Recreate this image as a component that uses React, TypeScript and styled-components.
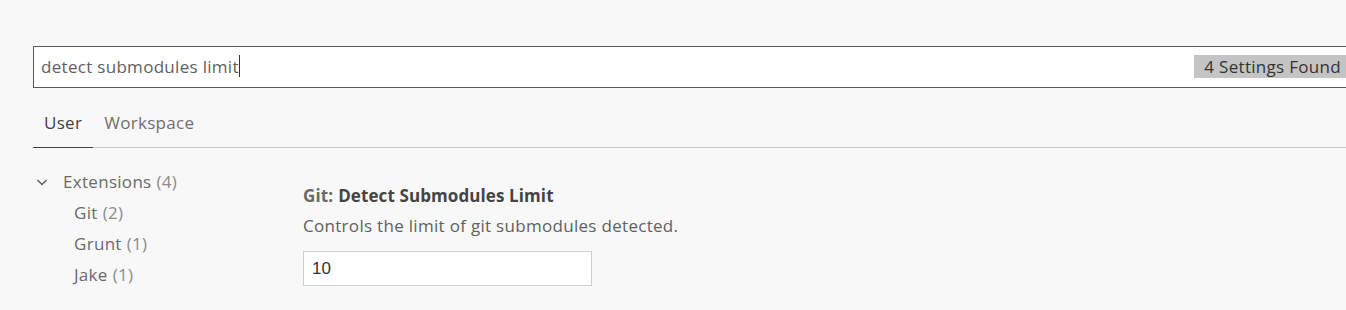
import React from "react";
import styled, { createGlobalStyle } from "styled-components";

const Global = createGlobalStyle`
  html, body { margin: 0; padding: 0; background: #f8f8f8; overflow: hidden; }
  body { font-family: "Open Sans", "Noto Sans", sans-serif; letter-spacing: 0.3px; }
`;

const Page = styled.div`
  width: 1346px;
  height: 310px;
  padding: 46px 0 0 33px;
  box-sizing: border-box;
  background: #f8f8f8;
  overflow: hidden;
`;

const SearchBox = styled.div`
  width: 1318px;
  height: 42px;
  box-sizing: border-box;
  border: 1px solid #5a5a5a;
  border-right: none;
  background: #ffffff;
  display: flex;
  align-items: center;
  padding: 0 0 2px 7px;
`;

const SearchText = styled.div`
  flex: 1;
  font-size: 17px;
  color: #5f5f5f;
  display: flex;
  align-items: center;
`;

const Caret = styled.span`
  display: inline-block;
  width: 1px;
  height: 22px;
  background: #333;
`;

const Badge = styled.div`
  height: 23px;
  background: #c4c4c4;
  color: #333333;
  font-size: 17px;
  display: flex;
  align-items: center;
  padding: 0 10px;
`;

const TabBar = styled.div`
  margin-top: 12px;
  display: flex;
  border-bottom: 1px solid #c8c8c8;
`;

const Tab = styled.div<{ $active?: boolean }>`
  height: 48px;
  padding: 0 11px 2px;
  box-sizing: border-box;
  display: flex;
  align-items: center;
  font-size: 17px;
  color: ${(p) => (p.$active ? "#424242" : "#6f6f6f")};
  margin-bottom: -1px;
  border-bottom: 1px solid ${(p) => (p.$active ? "#424242" : "transparent")};
`;

const Body = styled.div`
  display: flex;
  padding-top: 18px;
`;

const Tree = styled.div`
  width: 270px;
  display: flex;
  flex-direction: column;
`;

const TreeRow = styled.div<{ $indent: number }>`
  height: 31px;
  display: flex;
  align-items: center;
  padding-left: ${(p) => p.$indent}px;
  font-size: 17px;
  color: #6a6a6a;
`;

const Count = styled.span`
  color: #8c8c8c;
  margin-left: 5px;
`;

const Chevron = styled.svg`
  width: 12px;
  height: 12px;
  margin-right: 15px;
  margin-left: -1px;
`;

const Setting = styled.div`
  display: flex;
  flex-direction: column;
  padding-top: 15px;
`;

const Title = styled.div`
  font-size: 17px;
  font-weight: 700;
  color: #444444;
  height: 28px;
  display: flex;
  align-items: center;
  letter-spacing: 0.1px;
`;

const Category = styled.span`
  color: #6a6a6a;
  margin-right: 5px;
`;

const Description = styled.div`
  font-size: 17px;
  color: #616161;
  height: 32px;
  display: flex;
  align-items: center;
`;

const NumberInput = styled.div`
  margin-top: 10px;
  width: 289px;
  height: 35px;
  box-sizing: border-box;
  border: 1px solid #cecece;
  background: #ffffff;
  display: flex;
  align-items: center;
  padding-left: 8px;
  font-size: 17px;
  letter-spacing: 0;
  color: #333333;
  font-family: "Liberation Sans", Arial, sans-serif;
`;

export default function App() {
  return (
    <>
      <Global />
      <Page>
        <SearchBox>
          <SearchText>
            detect submodules limit
            <Caret />
          </SearchText>
          <Badge>4 Settings Found</Badge>
        </SearchBox>
        <TabBar>
          <Tab $active>User</Tab>
          <Tab>Workspace</Tab>
        </TabBar>
        <Body>
          <Tree>
            <TreeRow $indent={4}>
              <Chevron viewBox="0 0 12 12" fill="none" stroke="#5a5a5a" strokeWidth="1.3">
                <path d="M1.5 4 L6 8.5 L10.5 4" />
              </Chevron>
              Extensions<Count>(4)</Count>
            </TreeRow>
            <TreeRow $indent={41}>
              Git<Count>(2)</Count>
            </TreeRow>
            <TreeRow $indent={41}>
              Grunt<Count>(1)</Count>
            </TreeRow>
            <TreeRow $indent={41}>
              Jake<Count>(1)</Count>
            </TreeRow>
          </Tree>
          <Setting>
            <Title>
              <Category>Git:</Category>Detect Submodules Limit
            </Title>
            <Description>Controls the limit of git submodules detected.</Description>
            <NumberInput>10</NumberInput>
          </Setting>
        </Body>
      </Page>
    </>
  );
}
